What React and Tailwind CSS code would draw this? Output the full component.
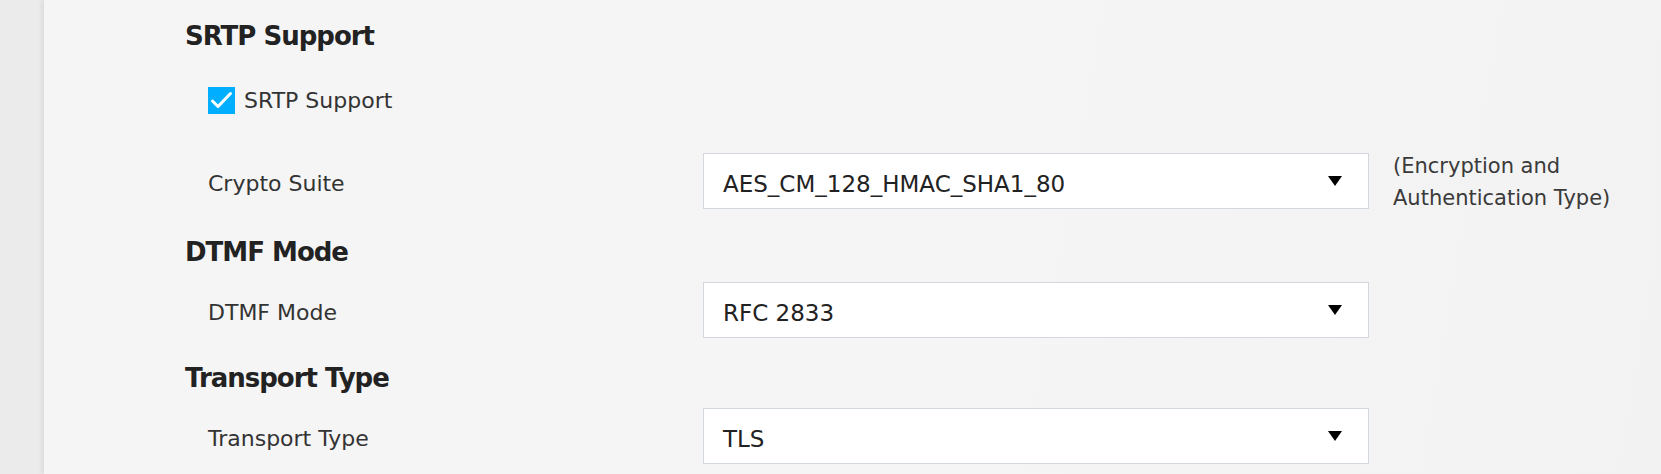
import React from "react";

const Caret = () => (
  <svg width="14" height="10" viewBox="0 0 14 10" className="shrink-0">
    <path d="M0 0 H14 L7 10 Z" fill="#000" />
  </svg>
);

const SelectBox = ({ value }) => (
  <div className="w-[666px] h-[56px] shrink-0 flex items-center justify-between bg-white border border-[#d3d8df] pl-[19px] pr-[26px]">
    <span className="pt-[6px] text-[23px] leading-[26px] text-[#222]">{value}</span>
    <Caret />
  </div>
);

const Row = ({ label, value, note, className }) => (
  <div className={`flex items-center ml-[23px] ${className}`}>
    <div className="w-[495px] shrink-0 pt-[6px] text-[22px] leading-[26px] text-[#333]">
      {label}
    </div>
    <SelectBox value={value} />
    {note && (
      <div className="ml-[24px] pt-[3px] text-[21px] leading-[32px] text-[#3a3a3a]">
        {note.map((line) => (
          <div key={line}>{line}</div>
        ))}
      </div>
    )}
  </div>
);

const Heading = ({ children, className }) => (
  <h2
    className={`h-[32px] text-[26px] leading-[32px] font-bold tracking-[-1px] text-[#222] ${className}`}
  >
    {children}
  </h2>
);

const App = () => {
  return (
    <div className="flex h-[474px] w-full overflow-hidden bg-[#ebebeb] font-['DejaVu_Sans',sans-serif]">
      <div className="w-[44px] shrink-0 bg-[#ebebeb]" />
      <div className="flex-1 pt-[20px] pl-[141px] bg-[linear-gradient(100deg,#f5f5f5_0%,#f5f5f5_60%,#f2f2f2_100%)] shadow-[-3px_0_4px_rgba(0,0,0,0.06)]">
        <Heading>SRTP Support</Heading>

        <div className="mt-[35px] ml-[23px] h-[27px] flex items-center">
          <span className="w-[27px] h-[27px] bg-[#00aeff] flex items-center justify-center">
            <svg width="27" height="27" viewBox="0 0 27 27">
              <path
                d="M4.5 14 L10 19.5 L22.5 6.5"
                fill="none"
                stroke="#fff"
                strokeWidth="3"
                strokeLinecap="round"
                strokeLinejoin="round"
              />
            </svg>
          </span>
          <span className="ml-[9px] text-[22px] leading-[27px] text-[#333]">
            SRTP Support
          </span>
        </div>

        <Row
          className="mt-[33px]"
          label="Crypto Suite"
          value="AES_CM_128_HMAC_SHA1_80"
          note={["(Encryption and", "Authentication Type)"]}
        />

        <Heading className="mt-[22px]">DTMF Mode</Heading>
        <Row className="mt-[14px]" label="DTMF Mode" value="RFC 2833" />

        <Heading className="mt-[24px]">Transport Type</Heading>
        <Row className="mt-[14px]" label="Transport Type" value="TLS" />
      </div>
    </div>
  );
};

export default App;
